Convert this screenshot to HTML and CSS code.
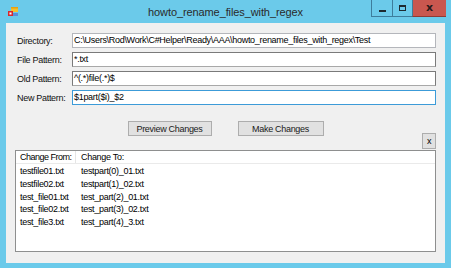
FILE: index.html
```html
<!DOCTYPE html>
<html>
<head>
<meta charset="utf-8">
<link rel="stylesheet" href="styles.css">
</head>
<body>
<div class="window">
  <div class="titlebar">
    <div class="tb-left">
      <svg class="app-icon" width="10" height="10" viewBox="0 0 10 10">
        <rect x="3" y="0" width="7" height="5" fill="#f2c230"/>
        <rect x="3" y="0" width="7" height="1.5" fill="#e8a010"/>
        <rect x="0" y="4" width="5" height="5" fill="#d8282c"/>
        <rect x="1.5" y="5.5" width="2" height="2" fill="#ffffff"/>
        <rect x="5" y="6" width="5" height="3" fill="#5a8fd8"/>
      </svg>
    </div>
    <div class="title">howto_rename_files_with_regex</div>
    <div class="tb-right">
      <div class="capbtn min"><span class="min-glyph"></span></div>
      <div class="capbtn max"><span class="max-glyph"></span></div>
      <div class="capbtn close">x</div>
    </div>
  </div>
  <div class="client">
    <div class="form">
      <label class="lbl">Directory:</label>
      <div class="box box-light">C:\Users\Rod\Work\C#Helper\Ready\AAA\howto_rename_files_with_regex\Test</div>
      <label class="lbl">File Pattern:</label>
      <div class="box box-dark">*.txt</div>
      <label class="lbl">Old Pattern:</label>
      <div class="box box-dark">^(.*)file(.*)$</div>
      <label class="lbl">New Pattern:</label>
      <div class="box box-focus">$1part($i)_$2</div>
    </div>
    <div class="buttons">
      <div class="btn btn-preview">Preview Changes</div>
      <div class="btn btn-make">Make Changes</div>
    </div>
    <div class="xrow"><div class="xbtn">x</div></div>
    <div class="listview">
      <div class="lv-header">
        <div class="col1 hcell">Change From:</div>
        <div class="col2 hcell">Change To:</div>
      </div>
      <div class="lv-body">
        <div class="lv-row"><div class="col1">testfile01.txt</div><div class="col2">testpart(0)_01.txt</div></div>
        <div class="lv-row"><div class="col1">testfile02.txt</div><div class="col2">testpart(1)_02.txt</div></div>
        <div class="lv-row"><div class="col1">test_file01.txt</div><div class="col2">test_part(2)_01.txt</div></div>
        <div class="lv-row"><div class="col1">test_file02.txt</div><div class="col2">test_part(3)_02.txt</div></div>
        <div class="lv-row"><div class="col1">test_file3.txt</div><div class="col2">test_part(4)_3.txt</div></div>
      </div>
    </div>
  </div>
</div>
</body>
</html>
```
FILE: styles.css
```css
* { box-sizing: border-box; }
html, body { margin: 0; padding: 0; }
body {
  width: 451px;
  height: 268px;
  overflow: hidden;
  font-family: "Liberation Sans", Arial, sans-serif;
  font-size: 9px;
  letter-spacing: -0.3px;
  color: #000;
}
.window {
  width: 451px;
  height: 268px;
  background: #6bcaea;
  display: flex;
  flex-direction: column;
}
.titlebar {
  height: 23px;
  display: grid;
  grid-template-columns: 1fr auto 1fr;
  flex: none;
}
.tb-left { padding: 7px 0 0 8px; }
.app-icon { display: block; }
.title {
  font-size: 11px;
  color: #2a2a2a;
  padding-top: 6px;
  letter-spacing: -0.1px;
}
.tb-right {
  display: flex;
  justify-content: flex-end;
  align-items: flex-start;
  padding-right: 5px;
  letter-spacing: 0;
}
.capbtn {
  height: 17px;
  display: flex;
  align-items: center;
  justify-content: center;
}
.min, .max {
  border-left: 1px solid #3d7d9c;
  border-bottom: 1px solid #3d7d9c;
}
.min { width: 21px; }
.max { width: 20px; }
.close {
  width: 34px;
  background: #c9574f;
  border-left: 1px solid #3d7d9c;
  border-bottom: 1px solid #8e3a34;
  font-family: "DejaVu Sans", sans-serif;
  font-weight: bold;
  font-size: 11px;
  color: #2a1a1a;
  padding-bottom: 2px;
}
.min-glyph {
  width: 7px;
  height: 2px;
  background: #1e2a30;
  margin-top: 5px;
}
.max-glyph {
  width: 7px;
  height: 6px;
  border: 1px solid #1e2a30;
  border-top-width: 2px;
}
.client {
  flex: 1;
  margin: 0 6px 5px 6px;
  background: #f0f0f0;
  padding-top: 10px;
  display: flex;
  flex-direction: column;
}
.form {
  display: grid;
  grid-template-columns: 55px 1fr;
  grid-auto-rows: 15px;
  row-gap: 4px;
  padding: 0 9px 0 11px;
}
.lbl {
  display: flex;
  align-items: center;
  white-space: nowrap;
  color: #111;
}
.box {
  background: #fff;
  border: 1px solid #abadb3;
  padding-left: 1px;
  line-height: 13px;
  white-space: nowrap;
  overflow: hidden;
}
.box-light { border-color: #b4b6bb; }
.box-dark { border-color: #7a7a7a; border-bottom-color: #a8a8a8; }
.box-focus { border-color: #3c9bd8; }
.buttons {
  display: flex;
  justify-content: center;
  gap: 26px;
  margin-top: 16px;
}
.btn {
  height: 15px;
  background: #e1e1e1;
  border: 1px solid #adadad;
  display: flex;
  align-items: center;
  justify-content: center;
  color: #1a1a1a;
}
.btn-preview { width: 84px; }
.btn-make { width: 86px; }
.xrow {
  display: flex;
  justify-content: flex-end;
  padding-right: 9px;
  margin-top: -3px;
}
.xbtn {
  width: 14px;
  height: 16px;
  background: #e1e1e1;
  border: 1px solid #adadad;
  display: flex;
  align-items: center;
  justify-content: center;
  padding-bottom: 1px;
}
.listview {
  margin: 1px 9px 0 9px;
  height: 102px;
  background: #fff;
  border: 1px solid #8e8f8f;
  flex: none;
}
.lv-header {
  display: flex;
  height: 13px;
  border-bottom: 1px solid #eaeaea;
}
.hcell {
  display: flex;
  align-items: center;
  padding-bottom: 1px;
}
.col1 {
  width: 60px;
  padding-left: 4px;
  white-space: nowrap;
}
.hcell.col1 { border-right: 1px solid #e5e5e5; letter-spacing: -0.5px; }
.col2 {
  padding-left: 5px;
  white-space: nowrap;
}
.lv-body { padding-top: 1px; }
.lv-row {
  display: flex;
  height: 12.67px;
  align-items: center;
}
```
